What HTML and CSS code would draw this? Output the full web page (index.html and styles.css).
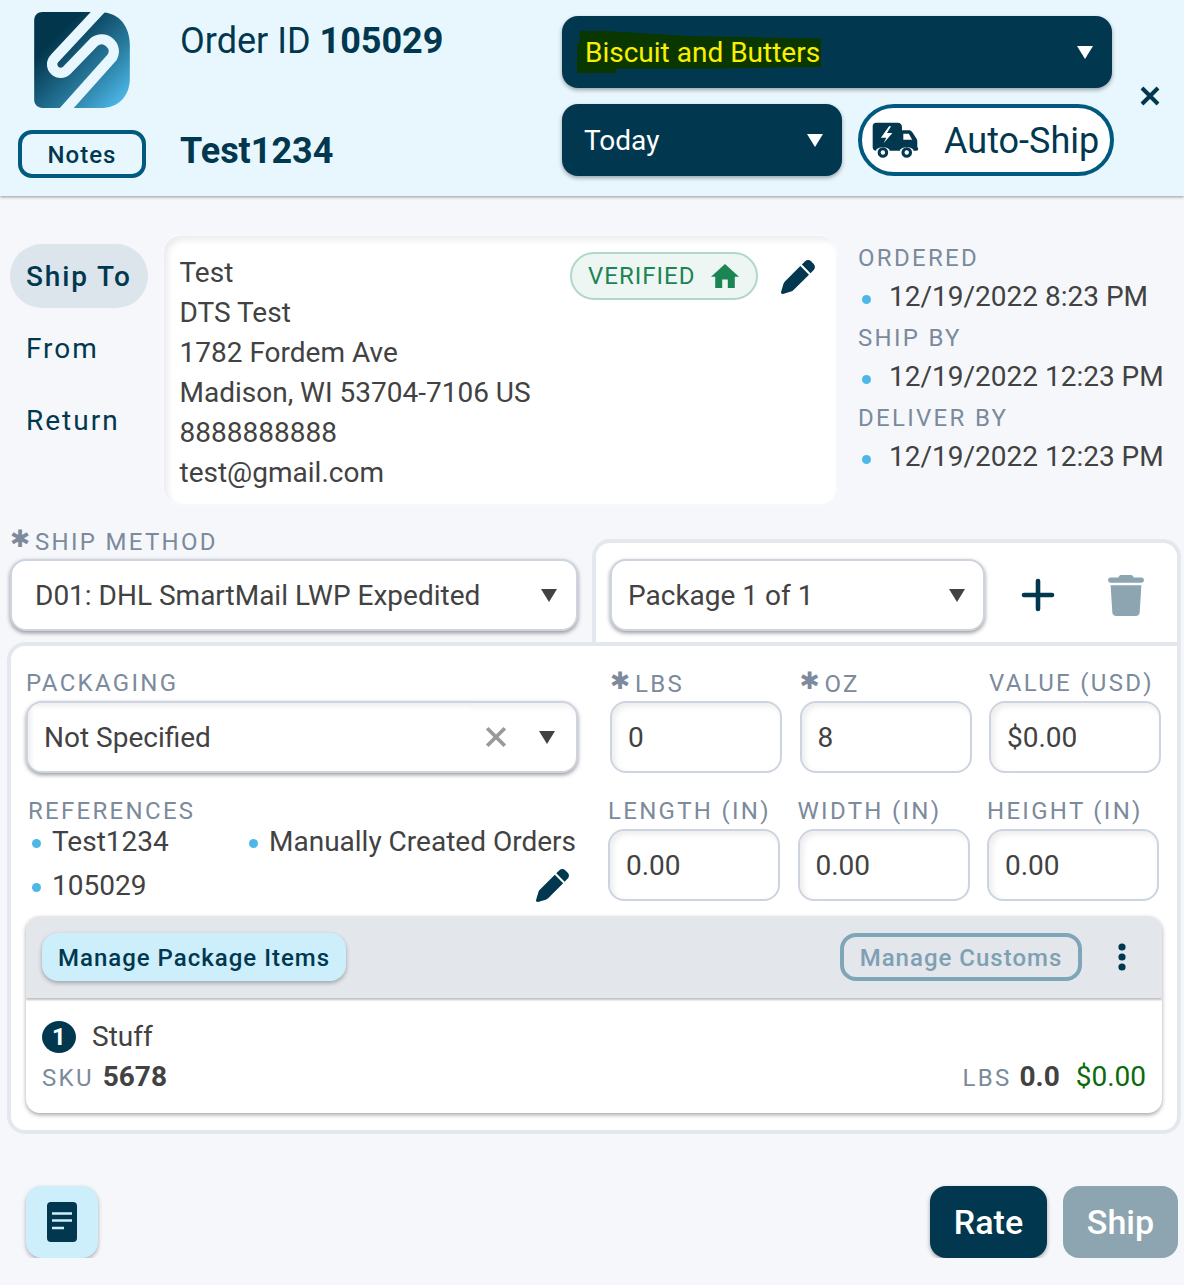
FILE: index.html
```html
<!DOCTYPE html>
<html lang="en">
<head>
    <meta charset="UTF-8">
    <meta name="viewport" content="width=device-width, initial-scale=1.0">
    <title>Order 105029</title>
    <link rel="stylesheet" href="styles.css">
</head>
<body>
    <header class="order-header">
        <div class="brand">
            <svg class="logo" viewBox="25 18 285 286" width="96" height="96">
                <defs>
                    <linearGradient id="logo-fill" x1="0.15" y1="0.15" x2="0.95" y2="0.95">
                        <stop offset="0.12" stop-color="#02364d"/>
                        <stop offset="0.6" stop-color="#27799c"/>
                        <stop offset="1" stop-color="#50bced"/>
                    </linearGradient>
                </defs>
                <path fill="url(#logo-fill)" d="M50 18H225C280 22 310 60 310 120V215C310 270 275 304 222 304H50C35 304 25 294 25 279V43C25 28 35 18 50 18Z"/>
                <path fill="none" stroke="#e8f7fe" stroke-width="31" d="M226 6L86 156A25 25 0 0 0 122 192L204 107A36 36 0 0 1 258 152L108 320"/>
            </svg>
            <button class="notes-btn">Notes</button>
        </div>
        <div class="order-title">
            <div class="order-id">Order ID <strong>105029</strong></div>
            <div class="order-ref">Test1234</div>
        </div>
        <div class="header-controls">
            <div class="dark-select store-select">
                <span class="store-name"><span class="highlight">Biscuit and Butters</span></span>
                <span class="caret caret-white"></span>
            </div>
            <div class="controls-row">
                <div class="dark-select date-select">
                    <span>Today</span>
                    <span class="caret caret-white"></span>
                </div>
                <button class="auto-ship">
                    <svg class="truck" viewBox="38 38 138 105" width="47" height="36">
                        <path fill="#02384f" d="M50 40H114C121 40 126 45 126 52V62H146C150 62 153 64 156 67L168 85C170 88 171 91 171 94V112C175 113 175 122 168 122H160C160 108 120 108 120 122H90C90 108 50 108 50 122C44 122 40 118 40 112V50C40 44 44 40 50 40Z"/>
                        <path fill="#fff" d="M130 72H146L156 90H130Z"/>
                        <path fill="#fff" d="M88 50L64 84H80L72 100L98 70H82L94 50Z"/>
                        <circle cx="70" cy="127" r="11" fill="#fff" stroke="#02384f" stroke-width="9"/>
                        <circle cx="140" cy="127" r="11" fill="#fff" stroke="#02384f" stroke-width="9"/>
                    </svg>
                    <span>Auto-Ship</span>
                </button>
            </div>
        </div>
        <svg class="close-icon" viewBox="0 0 20 20" width="20" height="20">
            <path d="M2 2L18 18M18 2L2 18" stroke="#02384f" stroke-width="4" fill="none"/>
        </svg>
    </header>

    <section class="address-row">
        <nav class="side-tabs">
            <div class="side-tab active">Ship To</div>
            <div class="side-tab">From</div>
            <div class="side-tab">Return</div>
        </nav>
        <div class="address-card">
            <div class="address-lines">
                <div>Test</div>
                <div>DTS Test</div>
                <div>1782 Fordem Ave</div>
                <div>Madison, WI 53704-7106 US</div>
                <div>8888888888</div>
                <div>test@gmail.com</div>
            </div>
            <div class="address-status">
                <span class="verified">
                    VERIFIED
                    <svg viewBox="2 3 20 17" width="28" height="24"><path fill="#1b8553" d="M10 20v-6h4v6h5v-8h3L12 3 2 12h3v8z"/></svg>
                </span>
                <svg class="pen" viewBox="0 0 512 512" width="34" height="34"><path d="M362.7 19.3L314.3 67.7 444.3 197.7l48.4-48.4c25-25 25-65.5 0-90.5L453.3 19.3c-25-25-65.5-25-90.5 0zm-71 71L58.6 323.5c-10.4 10.4-18 23.3-22.2 37.4L1 481.2C-1.5 489.7 .8 498.8 7 505s15.3 8.5 23.7 6.1l120.3-35.4c14.1-4.2 27-11.8 37.4-22.2L421.7 220.3 291.7 90.3z"/></svg>
            </div>
        </div>
        <div class="dates">
            <div class="field-label">Ordered</div>
            <div class="bullet-item">12/19/2022 8:23 PM</div>
            <div class="field-label">Ship By</div>
            <div class="bullet-item">12/19/2022 12:23 PM</div>
            <div class="field-label">Deliver By</div>
            <div class="bullet-item">12/19/2022 12:23 PM</div>
        </div>
    </section>

    <section class="ship-row">
        <div class="ship-method">
            <div class="field-label"><span class="req">✱</span>Ship Method</div>
            <div class="light-select">
                <span>D01: DHL SmartMail LWP Expedited</span>
                <span class="caret"></span>
            </div>
        </div>
        <div class="package-tab">
            <div class="light-select package-select">
                <span>Package 1 of 1</span>
                <span class="caret"></span>
            </div>
            <svg class="plus" viewBox="0 0 34 34" width="34" height="34"><path d="M17 3V31M3 17H31" stroke="#02384f" stroke-width="4.6" stroke-linecap="round"/></svg>
            <svg class="trash" viewBox="0 0 448 512" width="36" height="41"><path fill="#8ca5b1" d="M135.2 17.7L128 32H32C14.3 32 0 46.3 0 64S14.3 96 32 96H416c17.7 0 32-14.3 32-32s-14.3-32-32-32H320l-7.2-14.3C307.4 6.8 296.3 0 284.2 0H163.8c-12.1 0-23.2 6.8-28.6 17.7zM416 128H32L53.2 467c1.6 25.3 22.6 45 47.9 45H346.9c25.3 0 46.3-19.7 47.9-45L416 128z"/></svg>
        </div>
    </section>

    <section class="package-panel">
        <div class="package-fields">
            <div class="packaging">
                <div class="field-label">Packaging</div>
                <div class="light-select combo">
                    <span class="combo-value">Not Specified</span>
                    <span class="combo-clear">
                        <svg viewBox="0 0 20 20" width="22" height="22"><path d="M2 2L18 18M18 2L2 18" stroke="#999" stroke-width="3.4" fill="none"/></svg>
                    </span>
                    <span class="caret"></span>
                </div>
            </div>
            <div class="input-group">
                <div>
                    <div class="field-label"><span class="req">✱</span>LBS</div>
                    <div class="text-input">0</div>
                </div>
                <div>
                    <div class="field-label"><span class="req">✱</span>OZ</div>
                    <div class="text-input">8</div>
                </div>
                <div>
                    <div class="field-label">Value (USD)</div>
                    <div class="text-input">$0.00</div>
                </div>
            </div>
            <div class="references">
                <div class="field-label">References</div>
                <div class="ref-grid">
                    <div class="bullet-item">Test1234</div>
                    <div class="bullet-item">Manually Created Orders</div>
                    <div class="bullet-item">105029</div>
                    <svg class="pen ref-pen" viewBox="0 0 512 512" width="33" height="33"><path d="M362.7 19.3L314.3 67.7 444.3 197.7l48.4-48.4c25-25 25-65.5 0-90.5L453.3 19.3c-25-25-65.5-25-90.5 0zm-71 71L58.6 323.5c-10.4 10.4-18 23.3-22.2 37.4L1 481.2C-1.5 489.7 .8 498.8 7 505s15.3 8.5 23.7 6.1l120.3-35.4c14.1-4.2 27-11.8 37.4-22.2L421.7 220.3 291.7 90.3z"/></svg>
                </div>
            </div>
            <div class="input-group dims">
                <div>
                    <div class="field-label">Length (in)</div>
                    <div class="text-input">0.00</div>
                </div>
                <div>
                    <div class="field-label">Width (in)</div>
                    <div class="text-input">0.00</div>
                </div>
                <div>
                    <div class="field-label">Height (in)</div>
                    <div class="text-input">0.00</div>
                </div>
            </div>
        </div>

        <div class="items-card">
            <div class="items-head">
                <button class="manage-items">Manage Package Items</button>
                <button class="manage-customs">Manage Customs</button>
                <svg class="kebab" viewBox="0 0 8 28" width="8" height="28">
                    <circle cx="4" cy="4" r="3.6"/><circle cx="4" cy="14" r="3.6"/><circle cx="4" cy="24" r="3.6"/>
                </svg>
            </div>
            <div class="items-body">
                <div class="item-name"><span class="qty">1</span>Stuff</div>
                <div class="item-meta">
                    <span class="sku"><span class="meta-key">SKU</span> <b>5678</b></span>
                    <span><span class="meta-key">LBS</span> <b>0.0</b> <span class="price">$0.00</span></span>
                </div>
            </div>
        </div>
    </section>

    <footer class="actions">
        <button class="doc-btn">
            <svg viewBox="0 0 30 40" width="30" height="40">
                <rect width="30" height="40" rx="4" fill="#02384f"/>
                <path d="M5 11.5H25M5 18.5H25M5 26H17" stroke="#cdeefb" stroke-width="2.4"/>
            </svg>
        </button>
        <div class="action-btns">
            <button class="rate-btn">Rate</button>
            <button class="ship-btn">Ship</button>
        </div>
    </footer>
</body>
</html>
```

FILE: styles.css
```css
* {
    box-sizing: border-box;
}
body {
    margin: 0;
    background-color: #f5f7fb;
    font-family: Roboto, "Liberation Sans", sans-serif;
    color: #424242;
    font-size: 28px;
}
button {
    font-family: inherit;
    padding: 0;
    cursor: pointer;
}

/* header */
.order-header {
    display: flex;
    height: 196px;
    background-color: #e8f7fe;
    box-shadow: 0 1px 3px rgba(0,0,0,0.4);
    color: #02384f;
    position: relative;
}
.brand {
    display: flex;
    flex-direction: column;
    align-items: center;
    width: 128px;
    margin-left: 18px;
    padding-top: 12px;
}
.notes-btn {
    width: 128px;
    height: 48px;
    margin-top: 22px;
    padding-top: 2px;
    background: transparent;
    border: 4px solid #005a80;
    border-radius: 14px;
    color: #02384f;
    font-size: 24px;
    font-weight: 500;
    letter-spacing: 1px;
}
.order-title {
    width: 382px;
    margin-left: 34px;
    padding-top: 20px;
}
.order-id {
    font-size: 36px;
    line-height: 42px;
}
.order-id strong {
    font-weight: 700;
}
.order-ref {
    margin-top: 68px;
    font-size: 36px;
    line-height: 42px;
    font-weight: 700;
}
.header-controls {
    width: 552px;
    padding-top: 16px;
}
.dark-select {
    display: flex;
    align-items: center;
    justify-content: space-between;
    height: 72px;
    background-color: #02384f;
    border-radius: 16px;
    color: #fff;
    box-shadow: 0 2px 4px rgba(0,0,0,0.35);
    padding: 0 19px 0 23px;
    font-size: 28px;
}
.store-select {
    width: 550px;
    margin-bottom: 16px;
}
.store-name {
    display: flex;
}
.highlight {
    margin-left: -8px;
    padding: 5px 1px 3px 8px;
    line-height: 34px;
    background-color: #0a3600;
    color: #f9f000;
    font-size: 28px;
    clip-path: polygon(1% 0, 12% 0, 45% 12%, 100% 18%, 100% 85%, 50% 90%, 16% 90%, 16% 100%, 0 100%, 0 30%, 1% 30%);
}
.controls-row {
    display: flex;
    gap: 16px;
}
.date-select {
    width: 280px;
    padding-left: 22px;
}
.date-select span:first-child {
    padding-top: 1px;
}
.caret {
    width: 0;
    height: 0;
    border-left: 8px solid transparent;
    border-right: 8px solid transparent;
    border-top: 13px solid #424242;
}
.caret-white {
    border-top-color: #fff;
}
.auto-ship {
    display: flex;
    align-items: center;
    width: 256px;
    height: 72px;
    background-color: #fff;
    border: 4px solid #005a80;
    border-radius: 36px;
    color: #02384f;
    font-size: 36px;
    padding-left: 10px;
}
.auto-ship span {
    margin-left: 25px;
    padding-top: 2px;
}
.close-icon {
    margin: 86px 0 0 26px;
}

/* address */
.address-row {
    display: flex;
    margin-top: 40px;
    padding-left: 10px;
}
.side-tabs {
    width: 138px;
    padding-top: 8px;
}
.side-tab {
    height: 64px;
    margin-bottom: 8px;
    line-height: 66px;
    padding-left: 16px;
    border-radius: 32px;
    color: #02384f;
    font-size: 28px;
    letter-spacing: 2px;
}
.side-tab.active {
    background-color: #dce5ec;
    font-weight: 500;
    letter-spacing: 1.85px;
}
.address-card {
    display: flex;
    justify-content: space-between;
    width: 672px;
    height: 268px;
    margin-left: 16px;
    padding: 17px 21px 0 16px;
    background-color: #fff;
    border-radius: 16px;
    box-shadow: inset 4px 4px 6px rgba(0,0,0,0.08), 0 0 4px rgba(255,255,255,0.8);
    line-height: 40px;
}
.address-lines {
    margin-left: -0.5px;
}
.address-status {
    display: flex;
    align-items: flex-start;
    gap: 23px;
    margin-top: -1px;
}
.verified {
    display: flex;
    align-items: center;
    justify-content: space-between;
    width: 188px;
    height: 48px;
    padding: 0 17px 0 16px;
    background-color: #edf6f3;
    border: 2px solid #b2d9c6;
    border-radius: 24px;
    color: #1b8553;
    font-size: 24px;
    letter-spacing: 1px;
}
.pen {
    fill: #02384f;
    margin-top: 8px;
}
.dates {
    margin-left: 22px;
    padding-top: 2px;
    line-height: 38px;
}
.field-label {
    height: 24px;
    font-size: 24px;
    line-height: 24px;
    letter-spacing: 2.3px;
    color: #7b8a9c;
    text-transform: uppercase;
}
.dates .field-label {
    height: 40px;
    line-height: 40px;
}
.req {
    display: inline-block;
    width: 25px;
    font-family: "DejaVu Sans", sans-serif;
    font-size: 24px;
    line-height: 20px;
    vertical-align: 3px;
    letter-spacing: 0;
}
.bullet-item {
    position: relative;
    padding-left: 31px;
}
.dates .bullet-item {
    padding-bottom: 2px;
}
.bullet-item::before {
    content: "";
    position: absolute;
    left: 4px;
    top: 50%;
    width: 9px;
    height: 9px;
    margin-top: -3px;
    background-color: #4db8e8;
    border-radius: 50%;
}

/* ship method */
.ship-row {
    display: flex;
    align-items: flex-end;
    gap: 14px;
    margin-top: 25px;
    padding-left: 10px;
}
.ship-method {
    width: 568px;
    padding-bottom: 11px;
}
.ship-method .field-label {
    margin-bottom: 6px;
}
.light-select {
    display: flex;
    align-items: center;
    justify-content: space-between;
    height: 72px;
    padding: 0 19px 0 23px;
    background-color: #fff;
    border: 2px solid #cdd4e0;
    border-radius: 16px;
    box-shadow: 0 2px 4px rgba(0,0,0,0.4);
}
.package-tab {
    display: flex;
    align-items: center;
    width: 589px;
    height: 103px;
    padding: 16px 0 11px 14px;
    background-color: #fff;
    border: 4px solid #e4e8ee;
    border-bottom: 0;
    border-radius: 18px 18px 0 0;
}
.package-select {
    width: 375px;
    padding: 0 18px 0 16px;
}
.plus {
    margin-left: 36px;
}
.trash {
    margin-left: 53px;
}

/* package panel */
.package-panel {
    width: 1174px;
    height: 492px;
    margin-left: 7px;
    padding: 25px 15px 0;
    background-color: #fff;
    border: 4px solid #e4e8ee;
    border-radius: 18px;
    border-top-right-radius: 0;
}
.package-fields {
    display: grid;
    grid-template-columns: 552px 552px;
    column-gap: 32px;
    row-gap: 26px;
}
.packaging .field-label,
.input-group .field-label {
    margin-bottom: 6px;
    white-space: nowrap;
}
.combo {
    padding: 0 17px 0 0;
    justify-content: flex-start;
    box-shadow: 0 2px 4px rgba(0,0,0,0.4), inset 4px 4px 6px rgba(0,0,0,0.06);
    overflow: hidden;
}
.combo-value {
    width: 443px;
    height: 100%;
    padding-left: 16px;
    line-height: 70px;
    background-color: #fff;
    box-shadow: inset 3px 3px 5px rgba(0,0,0,0.07);
}
.combo-clear {
    display: flex;
    margin-left: 14px;
    margin-right: 32px;
}
.input-group {
    display: grid;
    grid-template-columns: repeat(3, 172px);
    column-gap: 17.5px;
}
.text-input {
    height: 72px;
    padding-left: 16px;
    line-height: 70px;
    background-color: #fff;
    border: 2px solid #cdd4e0;
    border-radius: 16px;
    box-shadow: inset 3px 3px 6px rgba(0,0,0,0.08);
}
.dims {
    margin-left: -2px;
}
.references {
    height: 96px;
    padding-left: 2px;
}
.ref-grid {
    display: grid;
    grid-template-columns: 217px 1fr;
    line-height: 44px;
    margin-top: -3px;
}
.ref-grid .bullet-item {
    padding-left: 24px;
    white-space: nowrap;
}
.ref-pen {
    justify-self: end;
    margin: 5px 9px 0 0;
}
.items-card {
    width: 1136px;
    height: 197px;
    margin-top: 15px;
    background-color: #fff;
    border-radius: 14px;
    box-shadow: 0 2px 4px rgba(0,0,0,0.35);
    overflow: hidden;
}
.items-head {
    display: flex;
    align-items: center;
    height: 82px;
    padding: 0 36px 0 16px;
    background-color: #e3e6eb;
    box-shadow: 0 2px 2px rgba(0,0,0,0.25);
    position: relative;
}
.manage-items {
    width: 304px;
    height: 48px;
    padding-top: 2px;
    background-color: #cdeefb;
    border: 0;
    border-radius: 16px;
    box-shadow: 0 2px 4px rgba(0,0,0,0.3);
    color: #02384f;
    font-size: 24px;
    font-weight: 500;
    letter-spacing: 1px;
}
.manage-customs {
    width: 242px;
    height: 48px;
    margin-left: auto;
    padding-top: 2px;
    background: transparent;
    border: 4px solid #7fa5b9;
    border-radius: 16px;
    color: #7fa0b3;
    font-size: 24px;
    font-weight: 500;
    letter-spacing: 1px;
}
.kebab {
    margin-left: 36px;
    fill: #02384f;
}
.items-body {
    padding: 19px 16px 0;
    line-height: 40px;
}
.item-name {
    display: flex;
    align-items: center;
}
.qty {
    width: 34px;
    height: 32px;
    margin-right: 16px;
    background-color: #02384f;
    border-radius: 50%;
    color: #fff;
    font-size: 24px;
    font-weight: 700;
    line-height: 32px;
    text-align: center;
}
.item-meta {
    display: flex;
    justify-content: space-between;
    line-height: 40px;
}
.item-meta b {
    font-weight: 700;
    margin-left: 1px;
}
.sku b {
    margin-left: 2px;
}
.meta-key {
    font-size: 24px;
    letter-spacing: 2.3px;
    color: #7b8a9c;
}
.price {
    margin-left: 9px;
    color: #0b6b0b;
}

/* footer */
.actions {
    display: flex;
    justify-content: space-between;
    margin-top: 52px;
    padding: 0 6px 0 26px;
}
.doc-btn {
    display: flex;
    align-items: center;
    justify-content: center;
    width: 72px;
    height: 72px;
    background-color: #cdeefb;
    border: 0;
    border-radius: 16px;
    box-shadow: 0 2px 4px rgba(0,0,0,0.3);
}
.action-btns {
    display: flex;
    gap: 16px;
}
.rate-btn,
.ship-btn {
    height: 72px;
    border: 0;
    border-radius: 16px;
    color: #fff;
    font-size: 34px;
    font-weight: 500;
}
.rate-btn {
    width: 117px;
    background-color: #02384f;
    box-shadow: 0 2px 4px rgba(0,0,0,0.35);
}
.ship-btn {
    width: 115px;
    background-color: #8ca5b1;
}
```
